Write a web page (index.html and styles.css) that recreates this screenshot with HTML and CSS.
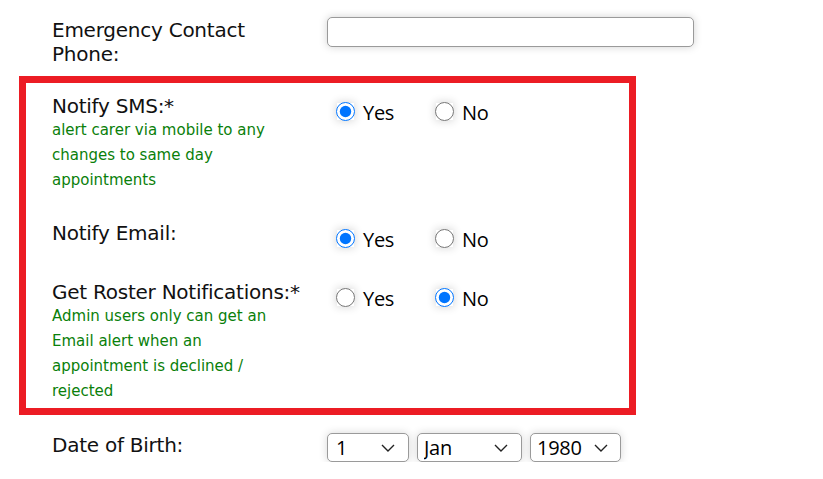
FILE: index.html
```html
<!DOCTYPE html>
<html lang="en">
<head>
<meta charset="utf-8">
<title>Carer details</title>
<link rel="stylesheet" href="styles.css">
</head>
<body>
<form class="form">
  <div class="row row-outer row-first">
    <label class="label" for="ecphone">Emergency Contact<br>Phone:</label>
    <div class="control control-input"><input id="ecphone" class="text" type="text"></div>
  </div>

  <div class="box">
    <div class="row row-in">
      <div class="labelcell">
        <div class="label">Notify SMS:*</div>
        <div class="hint">alert carer via mobile to any<br>changes to same day<br>appointments</div>
      </div>
      <div class="choices">
        <label class="opt"><input type="radio" name="sms" checked><span>Yes</span></label>
        <label class="opt"><input type="radio" name="sms"><span>No</span></label>
      </div>
    </div>
    <div class="row row-in">
      <div class="labelcell">
        <div class="label">Notify Email:</div>
      </div>
      <div class="choices">
        <label class="opt"><input type="radio" name="email" checked><span>Yes</span></label>
        <label class="opt"><input type="radio" name="email"><span>No</span></label>
      </div>
    </div>
    <div class="row row-in row-last">
      <div class="labelcell">
        <div class="label">Get Roster Notifications:*</div>
        <div class="hint">Admin users only can get an<br>Email alert when an<br>appointment is declined /<br>rejected</div>
      </div>
      <div class="choices">
        <label class="opt"><input type="radio" name="roster"><span>Yes</span></label>
        <label class="opt"><input type="radio" name="roster" checked><span>No</span></label>
      </div>
    </div>
  </div>

  <div class="row row-outer row-dob">
    <div class="label">Date of Birth:</div>
    <div class="control selects">
      <div class="sel sel-day">
        <select><option>1</option></select>
        <svg class="chev" viewBox="0 0 14 8" width="14" height="8"><path d="M1 1l6 6 6-6" fill="none" stroke="#222" stroke-width="1.4"/></svg>
      </div>
      <div class="sel sel-month">
        <select><option>Jan</option></select>
        <svg class="chev" viewBox="0 0 14 8" width="14" height="8"><path d="M1 1l6 6 6-6" fill="none" stroke="#222" stroke-width="1.4"/></svg>
      </div>
      <div class="sel sel-year">
        <select><option>1980</option></select>
        <svg class="chev" viewBox="0 0 14 8" width="14" height="8"><path d="M1 1l6 6 6-6" fill="none" stroke="#222" stroke-width="1.4"/></svg>
      </div>
    </div>
  </div>
</form>
</body>
</html>
```

FILE: styles.css
```css
html, body {
  margin: 0;
  padding: 0;
  background: #ffffff;
}

.form {
  margin: 0 0 0 19px;
  padding: 0;
  width: 700px;
}

.row {
  display: grid;
  grid-template-columns: 275px 1fr;
  align-items: start;
}

.row-outer {
  padding-left: 33px;
}

.row-first {
  padding-top: 18px;
}

.label {
  font-family: "DejaVu Sans", Verdana, sans-serif;
  font-size: 20px;
  line-height: 24px;
  letter-spacing: -0.25px;
  color: #111111;
}

.hint {
  font-family: "DejaVu Sans", Verdana, sans-serif;
  font-size: 15px;
  line-height: 25px;
  color: #0a800a;
}

.control-input {
  margin-top: -1px;
}

.text {
  display: block;
  box-sizing: border-box;
  width: 367px;
  height: 30px;
  margin: 0;
  border: 1px solid #9a9a9a;
  border-radius: 5px;
  background: #ffffff;
  box-shadow: 0 0 8px rgba(0, 0, 0, 0.18);
  font-family: "Open Sans", sans-serif;
  font-size: 18px;
}

.box {
  box-sizing: border-box;
  width: 617px;
  margin-top: 10px;
  border: 7px solid #ec1c24;
  padding: 11px 0 4px 26px;
}

.row-in {
  margin-bottom: 28px;
}

.row-last {
  margin-bottom: 0;
}

.choices {
  display: flex;
  align-items: center;
  box-sizing: border-box;
  height: 31px;
  padding: 3px 0 0 9px;
}

.opt {
  display: flex;
  align-items: center;
  gap: 8px;
  width: 99px;
  font-family: "Open Sans", "Noto Sans", sans-serif;
  font-size: 20px;
  letter-spacing: -0.3px;
  color: #000000;
}

.opt span {
  padding-top: 3px;
}

.opt input {
  width: 19px;
  height: 19px;
  margin: 0;
  background: #ffffff;
  box-shadow: 0 0 9px rgba(0, 0, 0, 0.16);
}

.row-dob {
  margin-top: 18px;
}

.selects {
  display: flex;
  gap: 8px;
}

.sel {
  position: relative;
}

.sel select {
  appearance: none;
  -webkit-appearance: none;
  display: block;
  box-sizing: border-box;
  height: 29px;
  margin: 0;
  padding: 0 0 0 8px;
  border: 1px solid #9a9a9a;
  border-radius: 5px;
  background: #ffffff;
  box-shadow: 0 0 8px rgba(0, 0, 0, 0.16);
  font-family: "Open Sans", "Noto Sans", sans-serif;
  font-size: 20px;
  line-height: 27px;
  letter-spacing: -0.3px;
  color: #000000;
}

.sel-day select { width: 82px; }
.sel-month select { width: 105px; padding-left: 6px; }
.sel-year select { width: 91px; padding-left: 6px; }

.chev {
  position: absolute;
  right: 14px;
  top: 11px;
  pointer-events: none;
}

.sel-year .chev {
  right: 13px;
}
```
